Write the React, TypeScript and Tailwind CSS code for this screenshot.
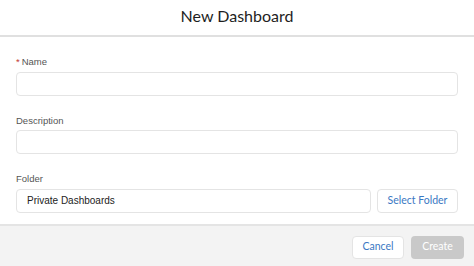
export default function App() {
  return (
    <div className="w-[474px] h-[266px] bg-white flex flex-col overflow-hidden font-['Liberation_Sans',Arial,sans-serif]">
      {/* Header */}
      <div className="h-[37px] flex items-center justify-center border-b-2 border-[#e0e0e0] shrink-0">
        <h1 className="text-[16px] text-[#1e1e1e] font-['Lato',sans-serif] leading-none mt-[-4px]">New Dashboard</h1>
      </div>

      {/* Body */}
      <div className="flex-1 px-4 pt-[20px]">
        <label className="block text-[9.5px] text-[#555] leading-none mb-[5px]">
          <span className="text-[#c23934] mr-[2px]">*</span>Name
        </label>
        <input className="block w-full h-[24px] rounded-[4px] border border-[#e4e4e4] bg-white outline-none" />

        <label className="block text-[9.5px] text-[#555] leading-none mt-[20px] mb-[5px]">Description</label>
        <input className="block w-full h-[24px] rounded-[4px] border border-[#e4e4e4] bg-white outline-none" />

        <label className="block text-[9.5px] text-[#555] leading-none mt-[20px] mb-[5px]">Folder</label>
        <div className="flex gap-[6px]">
          <div className="flex-1 h-[24px] rounded-[4px] border border-[#e4e4e4] flex items-center px-[10px] text-[10px] text-[#222]">
            Private Dashboards
          </div>
          <button className="w-[81px] h-[24px] rounded-[4px] border border-[#e4e4e4] bg-white text-[10.5px] text-[#3a78c3] font-['Lato',sans-serif]">
            Select Folder
          </button>
        </div>
      </div>

      {/* Footer */}
      <div className="h-[42px] shrink-0 bg-[#f3f3f3] border-t-2 border-[#e4e4e4] flex items-center justify-end gap-[7px] pr-[10px] pt-[2px]">
        <button className="w-[52px] h-[23px] rounded-[4px] border border-[#e4e4e4] bg-white text-[10.5px] text-[#3a78c3] font-['Lato',sans-serif]">
          Cancel
        </button>
        <button className="w-[53px] h-[23px] rounded-[4px] bg-[#c9c9c9] text-[10.5px] text-white font-['Lato',sans-serif]">
          Create
        </button>
      </div>
    </div>
  )
}
